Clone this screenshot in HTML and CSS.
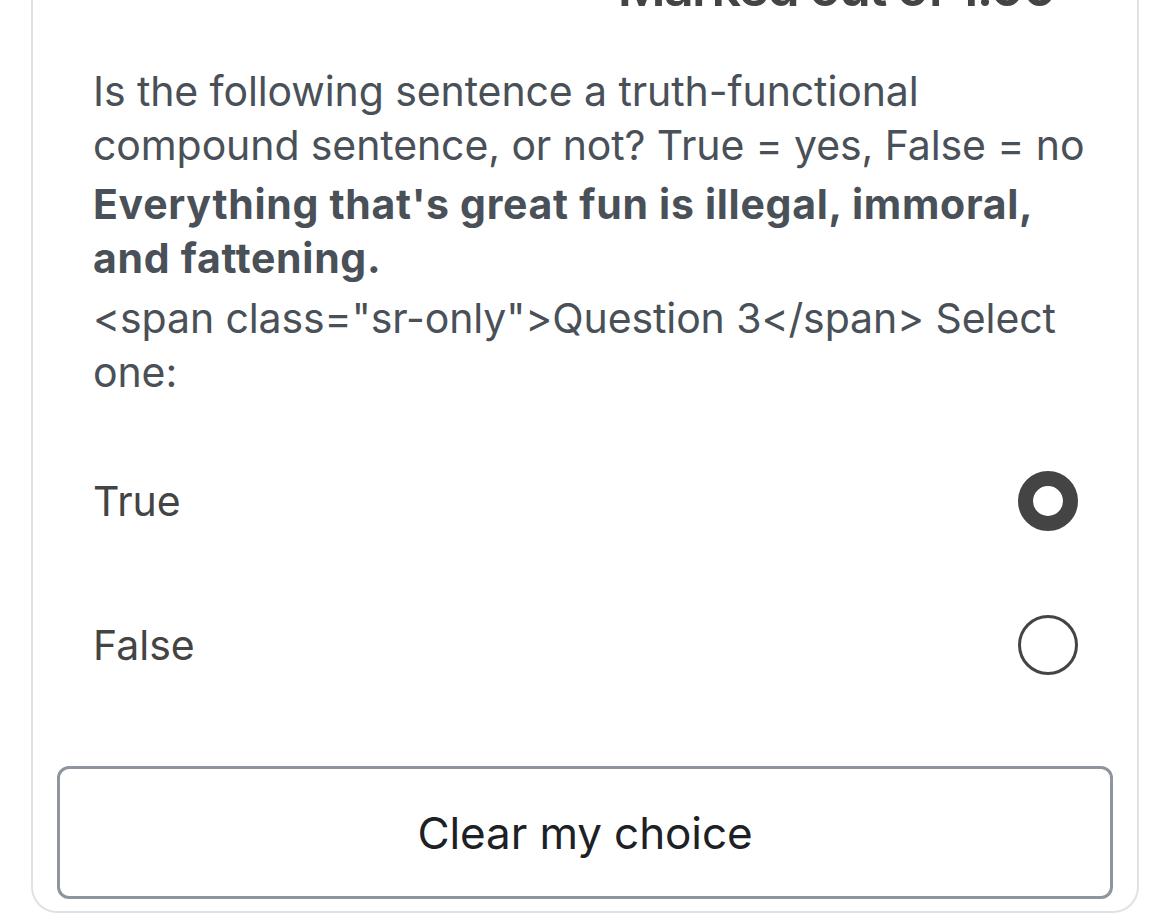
FILE: index.html
```html
<!DOCTYPE html>
<html>
<head>
<meta charset="utf-8">
<link rel="stylesheet" href="styles.css">
</head>
<body>
<div class="card">
  <div class="card-head"><span class="grade">Marked out of 1.00</span></div>
  <div class="qtext">
    <p class="prompt">Is the following sentence a truth-functional compound sentence, or not? True = yes, False = no</p>
    <p class="sentence">Everything that's great fun is illegal, immoral, and fattening.</p>
    <p class="prompt">&lt;span class="sr-only"&gt;Question 3&lt;/span&gt; Select one:</p>
  </div>
  <div class="answers">
    <label class="option">
      <span class="label">True</span>
      <span class="radio checked"></span>
    </label>
    <label class="option">
      <span class="label">False</span>
      <span class="radio"></span>
    </label>
  </div>
  <div class="actions">
    <button class="clear">Clear my choice</button>
  </div>
</div>
</body>
</html>
```
FILE: styles.css
```css
html, body {
  margin: 0;
  padding: 0;
  background: #ffffff;
  overflow: hidden;
}
body {
  font-family: Inter, "Liberation Sans", sans-serif;
  color: #495057;
}
.card {
  box-sizing: border-box;
  margin: -86px 0 0 31px;
  width: 1108px;
  border: 2px solid #dee2e6;
  border-top: none;
  border-radius: 0 0 26px 26px;
  padding: 0 24px 12px 24px;
}
.card-head {
  display: flex;
  justify-content: flex-end;
  height: 100px;
  align-items: flex-end;
  padding-right: 58px;
}
.grade {
  font-size: 52px;
  font-weight: 600;
  color: #444;
  letter-spacing: -1.8px;
  line-height: 1;
}
.qtext {
  padding: 50px 10px 0 36px;
}
.qtext p {
  margin: 0;
  font-size: 41px;
  line-height: 54px;
  letter-spacing: -0.1px;
}
.qtext .sentence {
  font-weight: 700;
  letter-spacing: 0.7px;
  margin: 5px 0 6px 0;
}
.answers {
  padding: 30px 35px 0 36px;
}
.option {
  display: flex;
  align-items: center;
  justify-content: space-between;
  height: 144px;
}
.label {
  font-size: 41px;
  color: #444;
}
.radio {
  box-sizing: border-box;
  width: 60px;
  height: 60px;
  border-radius: 50%;
  border: 3px solid #444;
}
.radio.checked {
  border: 15px solid #444;
}
.actions {
  padding-top: 49px;
}
.clear {
  display: block;
  box-sizing: border-box;
  width: 100%;
  height: 133px;
  background: #fff;
  border: 3px solid #8f959e;
  border-radius: 12px;
  font-family: Inter, "Liberation Sans", sans-serif;
  font-size: 44px;
  color: #1d2125;
  letter-spacing: -0.1px;
}
```
